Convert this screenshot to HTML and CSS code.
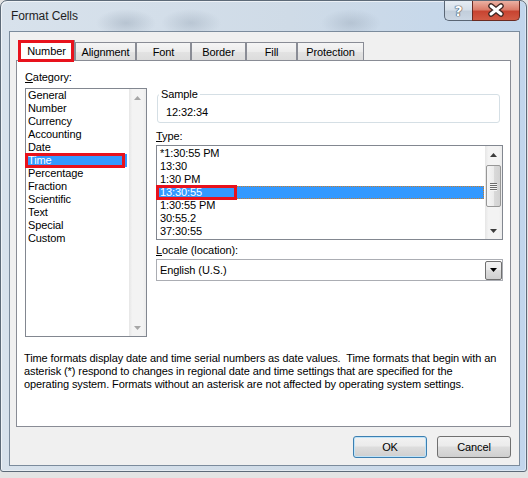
FILE: index.html
```html
<!DOCTYPE html>
<html>
<head>
<meta charset="utf-8">
<title>Format Cells</title>
<link rel="stylesheet" href="styles.css">
</head>
<body>
<div class="window">
  <div class="titlebar">
    <span class="title">Format Cells</span>
    <div class="caption">
      <div class="cbtn help">?</div>
      <div class="cbtn close">
        <svg width="46" height="19" viewBox="0 0 46 19">
          <path d="M18 5 L28 13 M28 5 L18 13" stroke="#3d2622" stroke-width="5.5" stroke-linecap="round" fill="none"/>
          <path d="M18 5 L28 13 M28 5 L18 13" stroke="#ffffff" stroke-width="3" stroke-linecap="round" fill="none"/>
        </svg>
      </div>
    </div>
  </div>
  <div class="client">
    <div class="tabs">
      <div class="tab active">Number<span class="mark"></span></div>
      <div class="tab">Alignment</div>
      <div class="tab">Font</div>
      <div class="tab">Border</div>
      <div class="tab">Fill</div>
      <div class="tab">Protection</div>
    </div>
    <div class="panel">
      <div class="cols">
        <div class="left">
          <div class="label"><u>C</u>ategory:</div>
          <div class="listbox cat">
            <div class="items">
              <div class="item">General</div>
              <div class="item">Number</div>
              <div class="item">Currency</div>
              <div class="item">Accounting</div>
              <div class="item">Date</div>
              <div class="item sel">Time<span class="mark mark-time"></span></div>
              <div class="item">Percentage</div>
              <div class="item">Fraction</div>
              <div class="item">Scientific</div>
              <div class="item">Text</div>
              <div class="item">Special</div>
              <div class="item">Custom</div>
            </div>
            <div class="vscroll disabled">
              <div class="sbtn"><svg width="7" height="4" viewBox="0 0 7 4"><path d="M0 4 L3.5 0 L7 4 Z" fill="#a6a6a6"/></svg></div>
              <div class="sbtn"><svg width="7" height="4" viewBox="0 0 7 4"><path d="M0 0 L3.5 4 L7 0 Z" fill="#a6a6a6"/></svg></div>
            </div>
          </div>
        </div>
        <div class="right">
          <fieldset class="sample">
            <legend>Sample</legend>
            <div class="sample-value">12:32:34</div>
          </fieldset>
          <div class="label label-type"><u>T</u>ype:</div>
          <div class="listbox type">
            <div class="items">
              <div class="item">*1:30:55 PM</div>
              <div class="item">13:30</div>
              <div class="item">1:30 PM</div>
              <div class="item sel focus">13:30:55<span class="mark mark-type"></span></div>
              <div class="item">1:30:55 PM</div>
              <div class="item">30:55.2</div>
              <div class="item">37:30:55</div>
            </div>
            <div class="vscroll">
              <div class="sbtn"><svg width="7" height="4" viewBox="0 0 7 4"><path d="M0 4 L3.5 0 L7 4 Z" fill="#3c3c3c"/></svg></div>
              <div class="thumb"><span class="grip"></span><span class="grip"></span><span class="grip"></span><span class="grip"></span></div>
              <div class="track"></div>
              <div class="sbtn"><svg width="7" height="4" viewBox="0 0 7 4"><path d="M0 0 L3.5 4 L7 0 Z" fill="#3c3c3c"/></svg></div>
            </div>
          </div>
          <div class="label label-locale"><u>L</u>ocale (location):</div>
          <div class="combo">
            <span class="combo-text">English (U.S.)</span>
            <div class="dd"><svg width="7" height="4" viewBox="0 0 7 4"><path d="M0 0 L3.5 4 L7 0 Z" fill="#000"/></svg></div>
          </div>
        </div>
      </div>
      <p class="desc">Time formats display date and time serial numbers as date values.&nbsp; Time formats that begin with an<br>asterisk (*) respond to changes in regional date and time settings that are specified for the<br>operating system. Formats without an asterisk are not affected by operating system settings.</p>
    </div>
    <div class="buttons">
      <button class="btn default">OK</button>
      <button class="btn">Cancel</button>
    </div>
  </div>
</div>
</body>
</html>
```

FILE: styles.css
```css
* { box-sizing: border-box; }
html, body { margin: 0; padding: 0; }
body {
  width: 528px;
  height: 478px;
  background: #e4e4e4;
  font-family: "Liberation Sans", Arial, sans-serif;
  font-size: 11px;
  letter-spacing: -0.1px;
  color: #000;
  overflow: hidden;
}
.window {
  width: 527px;
  height: 472px;
  border: 1px solid #5d6a78;
  border-radius: 7px 7px 3px 3px;
  background:
    radial-gradient(ellipse 30px 14px at 125px 22px, rgba(140,155,172,0.4), transparent),
    radial-gradient(ellipse 30px 14px at 190px 22px, rgba(140,155,172,0.35), transparent),
    radial-gradient(ellipse 30px 14px at 350px 22px, rgba(140,155,172,0.35), transparent),
    linear-gradient(to right, #d8e2ec 0%, #cfdbe7 55%, #c2d6ec 100%);
  padding: 0 6px 5px 8px;
  display: flex;
  flex-direction: column;
  box-shadow: inset 1px 1px 0 rgba(255,255,255,0.6), inset -1px -1px 0 rgba(255,255,255,0.4);
}
.titlebar {
  height: 30px;
  display: flex;
  justify-content: space-between;
  align-items: flex-start;
}
.title {
  font-size: 12px;
  line-height: 30px;
  padding-left: 2px;
  color: #1e1e1e;
  letter-spacing: -0.1px;
}
.caption {
  display: flex;
}
.cbtn {
  height: 20px;
  border: 1px solid #5a6675;
  border-top: none;
  display: flex;
  align-items: center;
  justify-content: center;
}
.help {
  width: 28px;
  border-right: none;
  border-radius: 0 0 0 5px;
  background: linear-gradient(#e6edf4 0%, #d6e0ea 45%, #c2cedb 55%, #cbd7e4 100%);
  color: #ffffff;
  font-weight: bold;
  font-size: 14px;
  text-shadow: 0 0 1px #3a4552, 0 0 1px #3a4552, 0 0 1px #3a4552;
  font-family: "DejaVu Sans", sans-serif;
}
.close {
  width: 48px;
  border-color: #6a2b22;
  border-radius: 0 0 5px 0;
  background: linear-gradient(#eab1a3 0%, #db7d6b 45%, #c84431 55%, #d25a44 100%);
}
.client {
  height: 435px;
  border: 1px solid #7b8b9c;
  background: #f0f0f0;
  padding: 8px 8px 7px 6px;
  display: flex;
  flex-direction: column;
}
.tabs {
  display: flex;
  height: 20px;
  padding-left: 2px;
  align-items: flex-end;
  position: relative;
  z-index: 1;
}
.tab {
  height: 18px;
  border: 1px solid #898c95;
  border-bottom: none;
  background: linear-gradient(#f5f5f5 0%, #ececec 50%, #e3e3e3 51%, #dcdcdc 100%);
  text-align: center;
  line-height: 18px;
  white-space: nowrap;
  position: relative;
}
.tab:nth-child(1) { width: 57px; }
.tab:nth-child(2) { width: 61px; }
.tab:nth-child(3) { width: 55px; }
.tab:nth-child(4) { width: 55px; }
.tab:nth-child(5) { width: 51px; }
.tab:nth-child(6) { width: 67px; }
.tab.active {
  height: 21px;
  margin-bottom: -1px;
  background: #ffffff;
  line-height: 20px;
}
.mark {
  position: absolute;
  border: 3px solid #e8121c;
  pointer-events: none;
}
.tab .mark { left: -1px; top: -1px; right: 0; bottom: -1px; }
.panel {
  height: 367px;
  border: 1px solid #898c95;
  background: #ffffff;
  padding: 10px 7px 0 8px;
}
.cols {
  display: flex;
  gap: 9px;
}
.left { width: 122px; }
.right { width: 347px; }
.label {
  height: 13px;
  line-height: 13px;
  white-space: nowrap;
}
.label u { text-decoration-thickness: 1px; text-underline-offset: 1px; }
.listbox {
  border: 1px solid #828790;
  background: #ffffff;
  display: flex;
}
.items { flex: 1; }
.item {
  height: 13px;
  line-height: 13px;
  white-space: nowrap;
  position: relative;
}
.item.sel {
  background: #3399ff;
  color: #ffffff;
}
.cat { margin-top: 4px; height: 249px; }
.cat .items { padding: 0 2px 0 1px; }
.cat .item { padding-left: 1px; }
.mark-time { left: -2px; top: -1px; width: 100px; bottom: -1px; }
.type { margin-top: 2px; height: 95px; }
.type .items { padding: 1px 1px 0 1px; }
.type .item { padding-left: 2px; }
.item.focus { outline: 1px dotted #c77d2e; outline-offset: -1px; }
.mark-type { left: -2px; top: -1px; width: 81px; bottom: -1px; }
.vscroll {
  width: 17px;
  background: linear-gradient(to right, #e6e6e6 0%, #f3f3f3 20%, #f3f3f3 80%, #ececec 100%);
  display: flex;
  flex-direction: column;
  justify-content: space-between;
}
.sbtn {
  height: 17px;
  display: flex;
  align-items: center;
  justify-content: center;
  flex: none;
}
.type .vscroll { justify-content: flex-start; }
.thumb {
  margin: 2px 1px 0 1px;
  height: 42px;
  border: 1px solid #979797;
  border-radius: 2px;
  background: linear-gradient(to right, #f6f6f6 0%, #ececec 50%, #dadada 51%, #d2d2d2 100%);
  display: flex;
  flex-direction: column;
  align-items: center;
  justify-content: center;
  gap: 1px;
  flex: none;
}
.grip {
  width: 7px;
  height: 1px;
  background: #6b6b6b;
  box-shadow: 0 1px 0 #f5f5f5;
}
.track { flex: 1; }
.sample {
  margin: 17px 3px 0 1px;
  border: 1px solid #d5dfe5;
  border-radius: 3px;
  padding: 5px 0 3px 1px;
  min-width: 0;
}
.sample legend {
  padding: 0 2px;
  line-height: 13px;
}
.sample-value {
  line-height: 13px;
  padding-left: 7px;
}
.label-type { margin-top: 7px; }
.label-locale { margin-top: 4px; }
.combo {
  margin-top: 2px;
  height: 22px;
  border: 1px solid #abadb3;
  background: #ffffff;
  display: flex;
  align-items: center;
  justify-content: space-between;
  padding: 1px 0 1px 3px;
}
.combo-text { line-height: 18px; }
.dd {
  width: 17px;
  height: 19px;
  border: 1px solid #707070;
  border-radius: 2px;
  background: linear-gradient(#f2f2f2 0%, #ebebeb 45%, #dddddd 50%, #cfcfcf 100%);
  display: flex;
  align-items: center;
  justify-content: center;
  margin-right: 0;
}
.desc {
  margin: 15px 0 0 -1px;
  line-height: 13px;
  white-space: nowrap;
}
.buttons {
  margin-top: 9px;
  display: flex;
  justify-content: flex-end;
  gap: 10px;
}
.btn {
  width: 74px;
  height: 22px;
  padding: 0;
  border: 1px solid #707070;
  border-radius: 3px;
  background: linear-gradient(#f2f2f2 0%, #ebebeb 45%, #dddddd 50%, #cfcfcf 100%);
  font-family: inherit;
  font-size: 11px;
  letter-spacing: -0.1px;
  color: #000;
}
.btn.default {
  border-color: #3c7fb1;
  box-shadow: inset 0 0 0 1px #bfe3f8;
}
```
